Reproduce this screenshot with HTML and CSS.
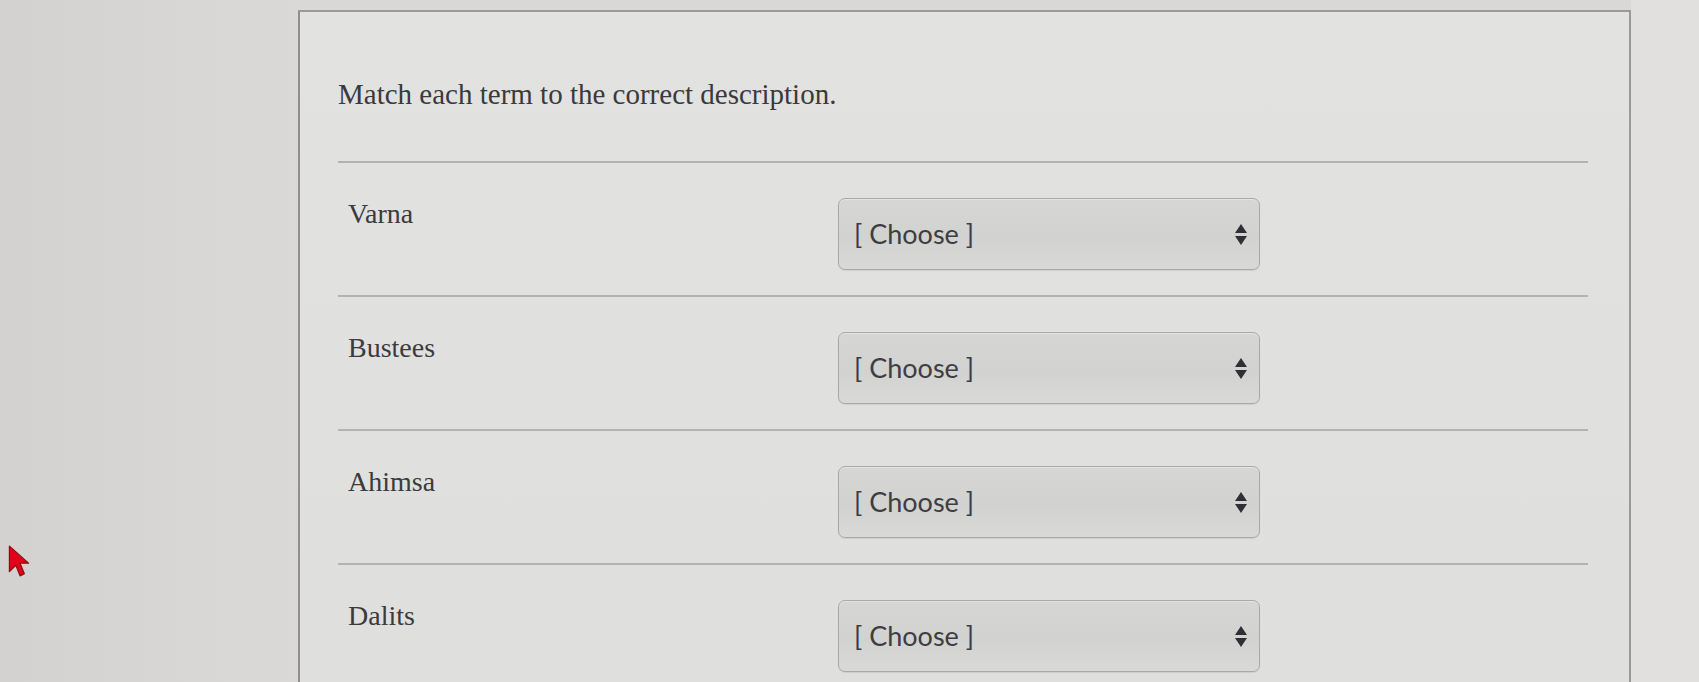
FILE: index.html
```html
<!DOCTYPE html>
<html>
<head>
<meta charset="utf-8">
<link rel="stylesheet" href="styles.css">
</head>
<body>
<div class="screen">
  <div class="gutter"></div>
  <main class="panel">
    <p class="question">Match each term to the correct description.</p>
    <div class="rows">
      <div class="row">
        <div class="term">Varna</div>
        <div class="select"><span class="choose">[ Choose ]</span><span class="arrows"><i class="up"></i><i class="down"></i></span></div>
      </div>
      <div class="row">
        <div class="term">Bustees</div>
        <div class="select"><span class="choose">[ Choose ]</span><span class="arrows"><i class="up"></i><i class="down"></i></span></div>
      </div>
      <div class="row">
        <div class="term">Ahimsa</div>
        <div class="select"><span class="choose">[ Choose ]</span><span class="arrows"><i class="up"></i><i class="down"></i></span></div>
      </div>
      <div class="row">
        <div class="term">Dalits</div>
        <div class="select"><span class="choose">[ Choose ]</span><span class="arrows"><i class="up"></i><i class="down"></i></span></div>
      </div>
    </div>
  </main>
  <div class="gutter-right"></div>
</div>
<svg class="cursor" width="24" height="34" viewBox="0 0 22 32">
  <path d="M2 2 L2 26 L8 20 L12 30 L16 28 L12 18 L20 18 Z" fill="#e3001b" stroke="#8a1010" stroke-width="1.2" stroke-linejoin="round"/>
</svg>
</body>
</html>
```
FILE: styles.css
```css
html, body {
  margin: 0;
  padding: 0;
  height: 100%;
  overflow: hidden;
}
body {
  background: #d9d8d6;
  position: relative;
}
.screen {
  display: flex;
  height: 100%;
}
.gutter {
  width: 298px;
  flex: none;
  background: linear-gradient(90deg, #d3d2d0, #dad9d7);
}
.gutter-right {
  flex: 1;
  background: #e1e0de;
}
.panel {
  width: 1333px;
  flex: none;
  margin-top: 10px;
  border-left: 2px solid #8f8f8f;
  border-right: 2px solid #9a9a9a;
  border-top: 2px solid #9a9a9a;
  background: linear-gradient(180deg, #e2e2e0, #dfdfdd);
  padding: 0 41px 0 38px;
  box-sizing: border-box;
}
.question {
  margin: 65px 0 0 0;
  font-family: "Liberation Serif", "Times New Roman", serif;
  font-size: 29px;
  line-height: 34px;
  color: #3a3a3c;
}
.rows {
  margin-top: 50px;
}
.row {
  border-top: 2px solid #b3b3b2;
  display: grid;
  grid-template-columns: 490px 422px;
  padding: 35px 0 25px 10px;
  align-items: start;
}
.term {
  font-family: "Liberation Serif", "Times New Roman", serif;
  font-size: 28px;
  line-height: 32px;
  color: #3b3b3d;
}
.select {
  height: 70px;
  border: 1px solid #a9a9a9;
  border-radius: 7px;
  background: linear-gradient(180deg, #d6d6d5 0%, #d2d2d1 55%, #d9d9d8 100%);
  box-shadow: inset 0 1px 0 rgba(255,255,255,0.35), 0 1px 1px rgba(0,0,0,0.08);
  display: flex;
  align-items: center;
  justify-content: space-between;
  padding: 0 12px 0 15px;
  margin-top: 0;
}
.choose {
  font-family: Lato, "Open Sans", sans-serif;
  font-size: 27px;
  color: #3d3d42;
  margin-top: -2px;
}
.arrows {
  display: flex;
  flex-direction: column;
  align-items: center;
  gap: 3px;
}
.arrows i {
  display: block;
  width: 0;
  height: 0;
  border-left: 6px solid transparent;
  border-right: 6px solid transparent;
}
.arrows .up {
  border-bottom: 9px solid #2f2f35;
}
.arrows .down {
  border-top: 9px solid #2f2f35;
}
.cursor {
  position: absolute;
  left: 7px;
  top: 544px;
}
```
